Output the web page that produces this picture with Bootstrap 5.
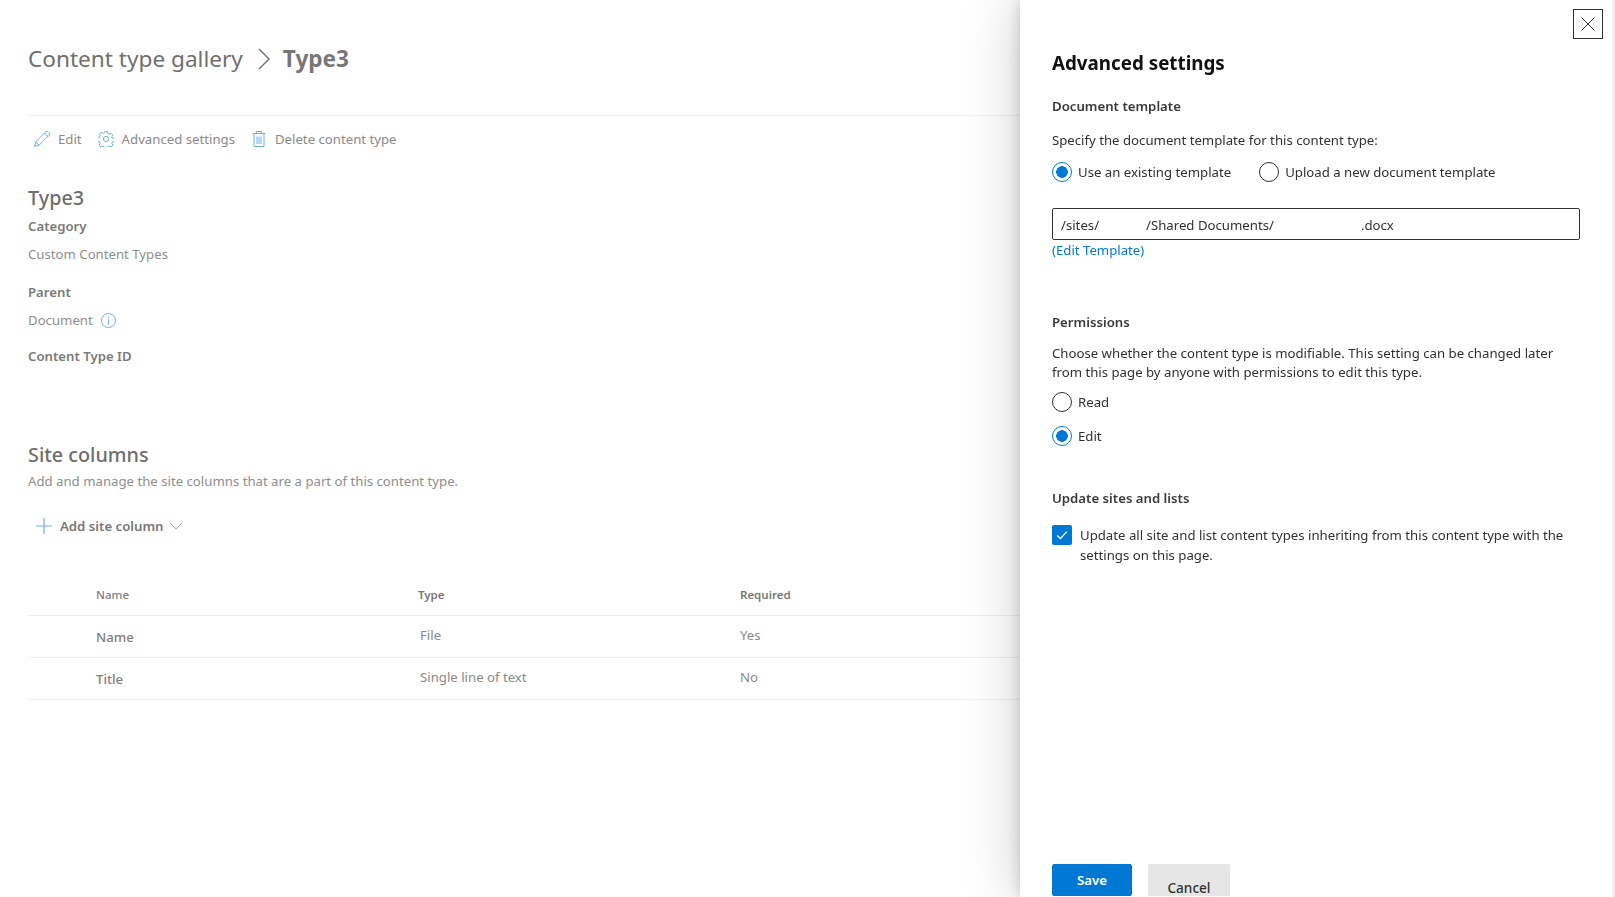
<!DOCTYPE html>
<html lang="en">
<head>
<meta charset="utf-8">
<title>Type3</title>
<link href="https://cdn.jsdelivr.net/npm/bootstrap@5.3.0/dist/css/bootstrap.min.css" rel="stylesheet">
<style>
html,body{height:100%;overflow:hidden;}
body{font-family:"Noto Sans","Open Sans",sans-serif;font-size:13.2px;line-height:20px;color:#777;background:#fff;}
.pagewrap{padding-left:28px;height:897px;overflow:hidden;}
.crumb{padding:40px 0 37px;border-bottom:1px solid #eee;line-height:38px;font-size:22.6px;color:#706f6e;}
.crumb b{font-weight:700;color:#777;}
.crumb svg{margin:0 12px 0 14px;}
.tools{height:46px;}
.tool{color:#8a8a8a;}
.tool svg{flex:none;}
.tooltext{margin-left:7px;}
.tooltext.wide{margin-left:8px;}
.tool.trash{margin-left:17px;}
.h-sec{font-size:19.8px;line-height:28px;color:#6f6e6d;font-weight:500;}
.lbl{font-weight:600;color:#7b7a79;}
.val{color:#8e8e8e;}
.addcol{height:32px;font-weight:600;color:#777;margin-top:19px;padding-left:8px;}
.addchev{margin-left:6px;}
.ftable{table-layout:fixed;width:100%;margin:33px 0 0;--bs-table-bg:transparent;--bs-table-color:#8a8a8a;--bs-border-color:#eee;}
.ftable th{font-size:11.5px;font-weight:600;color:#777;height:40px;padding:0;vertical-align:middle;line-height:16px;}
.ftable td{height:42px;padding:0;vertical-align:middle;line-height:18px;}
.ftable .cn{padding-left:68px;width:390px;font-weight:500;color:#7f7e7d;padding-top:2px;}
.ftable th.cn{padding-top:0;}
.ftable .ct{width:322px;padding-left:2px;padding-bottom:2px;}
.ftable th.ct{padding-left:0;padding-bottom:0;}
.ftable td.cr{padding-bottom:2px;}
.sidepane{position:fixed;top:0;right:0;bottom:0;width:595px;background:#fff;box-shadow:0 0 14px rgba(0,0,0,.18),0 0 56px rgba(0,0,0,.2);display:flex;flex-direction:column;color:#323130;border-right:3px solid #f0f0f0;}
.closebtn{position:absolute;top:9px;right:9px;width:30px;height:30px;border:1px solid #323130;border-radius:0;padding:0;display:flex;align-items:center;justify-content:center;background:#fff;}
.panebody{flex:1 1 auto;padding:49px 32px 0;}
.panetitle{font-size:18.8px;line-height:28px;font-weight:700;color:#111;margin:0;}
.subhead{font-weight:600;color:#3b3a39;margin:0;}
.rowline{height:20px;}
.form-check-input.fluent{width:20px;height:20px;margin:0;border:1px solid #323130;background-image:none;background-color:#fff;flex:none;}
.form-check-input.fluent:checked{border-color:#0078d4;background:radial-gradient(circle,#0078d4 0,#0078d4 5.5px,#fff 6.1px);}
.form-check-input.fluentbox{width:20px;height:20px;margin:1px 0 0;border:0;border-radius:2px;background-color:#0078d4;flex:none;background-size:14px;background-image:url("data:image/svg+xml,%3csvg xmlns='http://www.w3.org/2000/svg' viewBox='0 0 16 16'%3e%3cpath fill='none' stroke='%23fff' stroke-width='1.5' d='M2.5 8.5l3.6 3.6 7.4-8'/%3e%3c/svg%3e");}
.pathbox{height:32px;margin-top:26px;padding:1px 8px 0;border:1px solid #323130;border-radius:2px;display:flex;align-items:center;color:#323130;}
.gap1{margin-left:47px;}
.gap2{margin-left:87px;}
.editlink{color:#0078d4;text-decoration:none;display:block;}
.panefoot{height:32px;margin:0 32px 1px;overflow:hidden;flex:none;display:flex;align-items:flex-start;gap:16px;}
.savebtn{width:80px;height:32px;background:#0078d4;border-color:#0078d4;border-radius:2px;font-weight:600;font-size:13.2px;padding:1px 0 0;color:#fff;}
.cancelbtn{width:82px;height:40px;background:#e6e6e6;border:0;border-radius:2px;font-weight:500;font-size:13.6px;padding:8px 0 0;color:#323130;}
</style>
</head>
<body>
<div class="pagewrap">
  <div class="crumb d-flex align-items-center">
    <span>Content type gallery</span>
    <svg width="14" height="22" viewBox="0 0 14 22" fill="none" stroke="#6f6e6d" stroke-width="1.4"><path d="M2 1l10 10L2 21"/></svg>
    <b>Type3</b>
  </div>
  <div class="tools d-flex align-items-center">
    <span class="tool d-flex align-items-center">
      <svg style="margin-left:6px" width="16" height="16" viewBox="0 0 16 16" fill="none" stroke="#6db1e8" stroke-width="1"><path d="M.6 15.4l1.2-4.6L11.9.8a1.6 1.6 0 0 1 2.3 0l1 1a1.6 1.6 0 0 1 0 2.3L5.1 14.2z M1.8 10.8l3.3 3.4 M10.6 2.1l3.3 3.3"/></svg>
      <span class="tooltext ms-2">Edit</span>
    </span>
    <span class="tool d-flex align-items-center ms-3">
      <svg width="16" height="16" viewBox="0 0 16 16" fill="none" stroke="#6db1e8" stroke-width="1"><circle cx="8" cy="8" r="2.6"/><path d="M6.7.6h2.6l.4 2 1.5.7 1.8-1 1.8 1.9-1 1.7.7 1.5 2 .4v2.6l-2 .5-.7 1.5 1 1.7-1.8 1.9-1.8-1-1.5.6-.4 2H6.7l-.4-2-1.5-.6-1.8 1-1.8-1.9 1-1.7-.7-1.5-2-.5V6.8l2-.4.7-1.5-1-1.7 1.8-1.9 1.8 1 1.5-.7z"/></svg>
      <span class="tooltext ms-2">Advanced settings</span>
    </span>
    <span class="tool trash d-flex align-items-center">
      <svg width="14" height="16" viewBox="0 0 14 16" fill="none" stroke="#6db1e8" stroke-width="1"><path d="M.5 2.5h13 M4.5 2.5V.5h5v2 M2 2.5v13h10v-13 M5 5.5v7.5 M7 5.5v7.5 M9 5.5v7.5"/></svg>
      <span class="tooltext wide" style="margin-left:9px">Delete content type</span>
    </span>
  </div>
  <div class="h-sec" style="margin-top:22px">Type3</div>
  <div class="lbl mt-1">Category</div>
  <div class="val mt-2">Custom Content Types</div>
  <div class="lbl" style="margin-top:18px">Parent</div>
  <div class="val mt-2 d-flex align-items-center">Document
    <svg class="ms-2" width="15" height="15" viewBox="0 0 15 15" fill="none" stroke="#6db1e8"><circle cx="7.5" cy="7.5" r="7"/><path d="M7.5 6.5v5 M7.5 3.6v1.2"/></svg>
  </div>
  <div class="lbl" style="margin-top:16px">Content Type ID</div>
  <div class="h-sec" style="margin-top:75px">Site columns</div>
  <div class="val" style="margin-top:2px">Add and manage the site columns that are a part of this content type.</div>
  <div class="addcol d-flex align-items-center">
    <svg width="16" height="16" viewBox="0 0 16 16" stroke="#6db1e8" stroke-width="1.2"><path d="M8 0v16 M0 8h16"/></svg>
    <span class="ms-2">Add site column</span>
    <svg class="addchev" width="12" height="7" viewBox="0 0 12 7" fill="none" stroke="#a0a0a0"><path d="M.5.5L6 6 11.5.5"/></svg>
  </div>
  <table class="table ftable">
    <thead><tr><th class="cn">Name</th><th class="ct">Type</th><th>Required</th></tr></thead>
    <tbody>
      <tr><td class="cn">Name</td><td class="ct">File</td><td class="cr">Yes</td></tr>
      <tr><td class="cn">Title</td><td class="ct">Single line of text</td><td class="cr">No</td></tr>
    </tbody>
  </table>
</div>

<aside class="sidepane">
  <button type="button" class="btn closebtn" aria-label="Close">
    <svg width="14" height="14" viewBox="0 0 14 14" stroke="#323130" stroke-width="1"><path d="M.5.5l13 13 M13.5.5l-13 13"/></svg>
  </button>
  <div class="panebody">
    <h1 class="panetitle">Advanced settings</h1>
    <p class="subhead" style="margin-top:19px">Document template</p>
    <div style="margin-top:14px">Specify the document template for this content type:</div>
    <div class="d-flex align-items-center rowline" style="margin-top:12px">
      <input class="form-check-input fluent" type="radio" name="tpl" checked>
      <label style="margin-left:6px">Use an existing template</label>
      <input class="form-check-input fluent" type="radio" name="tpl" style="margin-left:28px">
      <label style="margin-left:6px">Upload a new document template</label>
    </div>
    <div class="pathbox"><span>/sites/</span><span class="gap1">/Shared Documents/</span><span class="gap2">.docx</span></div>
    <a class="editlink" href="#">(Edit Template)</a>
    <p class="subhead" style="margin-top:52px">Permissions</p>
    <div style="margin-top:12px;line-height:19px">Choose whether the content type is modifiable. This setting can be changed later<br>from this page by anyone with permissions to edit this type.</div>
    <div class="d-flex align-items-center rowline" style="margin-top:10px">
      <input class="form-check-input fluent" type="radio" name="perm"><label style="margin-left:6px">Read</label>
    </div>
    <div class="d-flex align-items-center rowline" style="margin-top:14px">
      <input class="form-check-input fluent" type="radio" name="perm" checked><label style="margin-left:6px">Edit</label>
    </div>
    <p class="subhead" style="margin-top:42px">Update sites and lists</p>
    <div class="d-flex" style="margin-top:16px">
      <input class="form-check-input fluentbox" type="checkbox" checked>
      <label style="margin-left:8px;margin-top:1px">Update all site and list content types inheriting from this content type with the settings on this page.</label>
    </div>
  </div>
  <div class="panefoot">
    <button type="button" class="btn btn-primary savebtn">Save</button>
    <button type="button" class="btn cancelbtn">Cancel</button>
  </div>
</aside>
<script src="https://cdn.jsdelivr.net/npm/bootstrap@5.3.0/dist/js/bootstrap.bundle.min.js"></script>
</body>
</html>
